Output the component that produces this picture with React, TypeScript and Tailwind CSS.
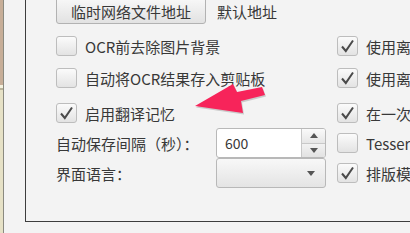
import React from "react";

function Check({ checked }: { checked?: boolean }) {
  return (
    <div className="w-[21px] h-[20px] shrink-0 rounded-[3px] border border-[#bdbdbd] bg-gradient-to-b from-[#fbfbfb] to-[#e3e3e3] flex items-center justify-center">
      {checked && (
        <svg width="15" height="14" viewBox="0 0 15 14">
          <path d="M2 7.5 L5.8 12 L13 1.5" fill="none" stroke="#4a4a4a" strokeWidth="2" strokeLinejoin="miter" />
        </svg>
      )}
    </div>
  );
}

function CheckRow({ checked, label }: { checked?: boolean; label: string }) {
  return (
    <div className="flex items-center gap-[8px] whitespace-nowrap shrink-0">
      <Check checked={checked} />
      <span>{label}</span>
    </div>
  );
}

export default function App() {
  return (
    <div
      className="w-[410px] h-[233px] overflow-hidden flex bg-[#f3f3f3] text-[#383838] text-[15px] leading-none"
      style={{ fontFamily: '"Noto Sans CJK SC", "Noto Sans", sans-serif' }}
    >
      <div className="w-[4px] shrink-0 flex flex-col border-r border-[#8a8a80]">
        <div className="h-[85px] bg-[#c7ae98]" />
        <div className="h-[3px] bg-[#f4f1de]" />
        <div className="h-[2px] bg-[#b9b39a]" />
        <div className="flex-1 bg-[#e6e1c6]" />
      </div>
      <div className="flex-1 pl-[21px] relative overflow-hidden">
        <div className="h-[222px] w-[420px] border-l border-b border-[#3d3d3d] pl-[30px] flex flex-col">
          <div className="flex items-center h-[30px] mt-[-6px]">
            <div className="w-[150px] shrink-0 h-[30px] rounded-[3px] border border-[#b2b2b2] bg-gradient-to-b from-[#fbfbfb] to-[#e2e2e2] flex items-center justify-center pt-[5px]">
              临时网络文件地址
            </div>
            <span className="ml-[11px] pt-[5px]">默认地址</span>
          </div>
          <div className="flex mt-[12px]">
            <div className="w-[281px] shrink-0"><CheckRow label="OCR前去除图片背景" /></div>
            <CheckRow checked label="使用离线翻译" />
          </div>
          <div className="flex mt-[12px]">
            <div className="w-[281px] shrink-0"><CheckRow label="自动将OCR结果存入剪贴板" /></div>
            <CheckRow checked label="使用离线OCR" />
          </div>
          <div className="flex mt-[15px]">
            <div className="w-[281px] shrink-0"><CheckRow checked label="启用翻译记忆" /></div>
            <CheckRow checked label="在一次" />
          </div>
          <div className="flex mt-[5px] h-[30px] items-center">
            <div className="w-[281px] shrink-0 flex items-center">
              <span className="w-[160px] shrink-0 whitespace-nowrap">自动保存间隔（秒）：</span>
              <div className="w-[110px] shrink-0 h-[30px] flex rounded-[3px] border border-[#b8b8b8] bg-white overflow-hidden">
                <div className="flex-1 flex items-center pl-[8px] text-[14px]">600</div>
                <div className="w-[24px] flex flex-col border-l border-[#c8c8c8]">
                  <div className="flex-1 flex items-center justify-center bg-gradient-to-b from-[#fafafa] to-[#e6e6e6] border-b border-[#c8c8c8]">
                    <svg width="8" height="5" viewBox="0 0 8 5"><path d="M0 5 L4 0 L8 5 Z" fill="#555" /></svg>
                  </div>
                  <div className="flex-1 flex items-center justify-center bg-gradient-to-b from-[#f2f2f2] to-[#e2e2e2]">
                    <svg width="8" height="5" viewBox="0 0 8 5"><path d="M0 0 L4 5 L8 0 Z" fill="#555" /></svg>
                  </div>
                </div>
              </div>
            </div>
            <CheckRow label="Tesseract" />
          </div>
          <div className="flex h-[30px] items-center">
            <div className="w-[281px] shrink-0 flex items-center">
              <span className="w-[160px] shrink-0 whitespace-nowrap">界面语言：</span>
              <div className="w-[110px] shrink-0 h-[30px] rounded-[3px] border border-[#b8b8b8] bg-gradient-to-b from-[#f8f8f8] to-[#e4e4e4] flex items-center justify-end pr-[10px]">
                <svg width="8" height="5" viewBox="0 0 8 5"><path d="M0 0 L4 5 L8 0 Z" fill="#555" /></svg>
              </div>
            </div>
            <CheckRow checked label="排版模式" />
          </div>
        </div>
        <svg className="absolute left-[186px] top-[78px]" width="80" height="40" viewBox="190 78 80 40">
          <path d="M195 106 L233 84 L237 92 L262 87 L265 95 L241 101 L243 113 Z" fill="#9a9a9a" opacity="0.45" transform="translate(1 1.5)" />
          <path d="M195 106 L233 84 L237 92 L262 87 L265 95 L241 101 L243 113 Z" fill="#f7245a" />
        </svg>
      </div>
    </div>
  );
}
